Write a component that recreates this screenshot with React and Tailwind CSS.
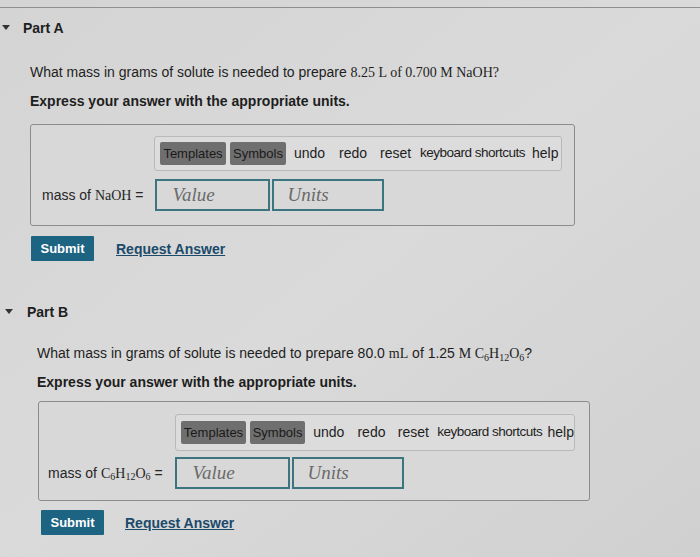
import React from "react";

const sans = { fontFamily: '"Liberation Sans", Arial, sans-serif' };
const serif = { fontFamily: '"Liberation Serif", serif' };

function Caret() {
  return (
    <svg width="8" height="6" viewBox="0 0 8 6" className="shrink-0">
      <path d="M0 0 L8 0 L4 5 Z" fill="#333" />
    </svg>
  );
}

function Toolbar({ className }) {
  return (
    <div className={`flex items-center whitespace-nowrap border border-[#b9b9b9] rounded-[3px] bg-[#dcdcdc] pl-[5px] text-[14px] text-[#1e1e1e] ${className}`}>
      <span className="bg-[#6f6f6f] rounded-[2px] h-[23px] w-[66px] flex items-center justify-center text-[13px] text-[#1a1a1a]">Templates</span>
      <span className="bg-[#6f6f6f] rounded-[2px] h-[23px] w-[56px] ml-[4px] flex items-center justify-center text-[13px] text-[#1a1a1a]">Symbols</span>
      <span className="ml-[8px] w-[45px]">undo</span>
      <span className="w-[41px]">redo</span>
      <span className="w-[40px]">reset</span>
      <span className="w-[108px] text-[13.5px] tracking-[-0.5px]">keyboard shortcuts</span>
      <span className="ml-[4px]">help</span>
    </div>
  );
}

function Part({ p }) {
  return (
    <div className={p.wrap}>
      <div className="flex items-center h-[18px]">
        <Caret />
        <span className="text-[14px] font-bold text-[#1e1e1e]" style={{ marginLeft: p.headGap }}>{p.title}</span>
      </div>
      <div className={p.body}>
        <p className="text-[14px] text-[#1e1e1e] leading-[18px]">
          What mass in grams of solute is needed to prepare {p.question}
        </p>
        <p className="text-[14px] font-bold text-[#1e1e1e] leading-[18px] mt-[10px]">
          Express your answer with the appropriate units.
        </p>
        <div className={`border-[1.5px] border-[#8c8c8c] rounded-[3px] bg-[#d8d8d8] ${p.box}`}>
          <Toolbar className={p.toolbar} />
          <div className={`flex items-center ${p.row}`}>
            <span className={`text-[14px] text-[#262626] ${p.labelGap}`}>mass of {p.formula} =</span>
            <div className="h-[32px] w-[115px] border-2 border-[#3c7480] flex items-center pl-[16px]">
              <span className="text-[19px] italic text-[#6a6a6a]" style={serif}>Value</span>
            </div>
            <div className="h-[32px] w-[112px] border-2 border-[#3c7480] flex items-center pl-[14px] ml-[2px]">
              <span className="text-[19px] italic text-[#6a6a6a]" style={serif}>Units</span>
            </div>
          </div>
        </div>
        <div className={`flex items-center ${p.actions}`}>
          <button className="h-[25px] w-[63px] bg-[#1d6483] text-white text-[13px] font-bold rounded-[1px]">Submit</button>
          <span className={`text-[14px] font-bold text-[#1b4a6b] underline ${p.link}`}>Request Answer</span>
        </div>
      </div>
    </div>
  );
}

const sub = (d) => <sub className="text-[10px]">{d}</sub>;

const parts = [
  {
    title: "Part A",
    headGap: 13,
    wrap: "pt-[11px] pl-[2px]",
    body: "pl-[28px] mt-[26px]",
    question: <span style={serif}>8.25 L of 0.700 M NaOH?</span>,
    formula: <span style={serif}>NaOH</span>,
    box: "mt-[14px] w-[545px] h-[102px] pt-[11px]",
    toolbar: "ml-[123px] w-[408px] h-[35px]",
    row: "mt-[8px] pl-[11px]",
    labelGap: "mr-[11px]",
    actions: "mt-[10px] pl-[1px]",
    link: "ml-[22px] mt-[2px]",
  },
  {
    title: "Part B",
    headGap: 14,
    wrap: "pt-[42px] pl-[5px]",
    body: "pl-[32px] mt-[23px]",
    question: (
      <span>
        80.0 <span style={serif}>mL</span> of 1.25 <span style={serif}>M C{sub(6)}H{sub(12)}O{sub(6)}</span>?
      </span>
    ),
    formula: <span style={serif}>C{sub(6)}H{sub(12)}O{sub(6)}</span>,
    box: "mt-[10px] w-[552px] h-[100px] pt-[12px] ml-[1px]",
    toolbar: "ml-[136px] w-[400px] h-[37px]",
    row: "mt-[6px] pl-[9px]",
    labelGap: "mr-[12px]",
    actions: "mt-[9px] pl-[4px]",
    link: "ml-[21px] mt-[2px]",
  },
];

export default function App() {
  return (
    <div className="w-[700px] h-[557px] overflow-hidden bg-gradient-to-br from-[#d4d4d4] via-[#dadada] to-[#d0d0d0]" style={sans}>
      <div className="pt-[7px]">
        <div className="border-t border-[#8f8f8f]" />
      </div>
      {parts.map((p) => (
        <Part key={p.title} p={p} />
      ))}
    </div>
  );
}
